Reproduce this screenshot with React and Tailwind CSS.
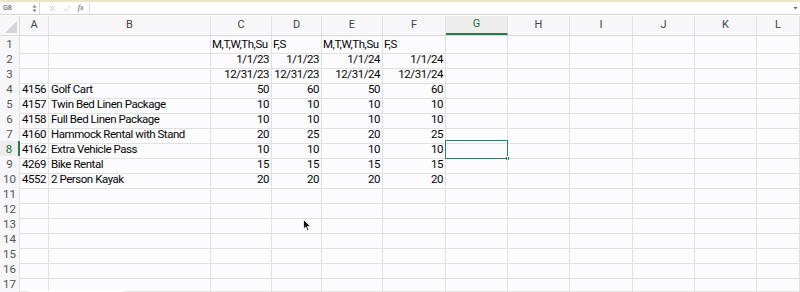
import React from "react";

const cols = ["A","B","C","D","E","F","G","H","I","J","K","L"];
const rows = [
  ["", "", "M,T,W,Th,Su", "F,S", "M,T,W,Th,Su", "F,S"],
  ["", "", "1/1/23", "1/1/23", "1/1/24", "1/1/24"],
  ["", "", "12/31/23", "12/31/23", "12/31/24", "12/31/24"],
  ["4156", "Golf Cart", "50", "60", "50", "60"],
  ["4157", "Twin Bed Linen Package", "10", "10", "10", "10"],
  ["4158", "Full Bed Linen Package", "10", "10", "10", "10"],
  ["4160", "Hammock Rental with Stand", "20", "25", "20", "25"],
  ["4162", "Extra Vehicle Pass", "10", "10", "10", "10"],
  ["4269", "Bike Rental", "15", "15", "15", "15"],
  ["4552", "2 Person Kayak", "20", "20", "20", "20"],
];
while (rows.length < 17) rows.push(["", "", "", "", "", ""]);

const gridCols = "grid grid-cols-[20px_29px_162px_61px_50px_61px_63px_62px_62px_63px_62px_62px_1fr]";

export default function App() {
  return (
    <div className="relative w-[800px] h-[292px] overflow-hidden bg-[#fcfbfd] text-[11.5px] tracking-[-0.45px] text-[#050505]" style={{ fontFamily: 'Roboto, "Liberation Sans", Arial, sans-serif' }}>
      {/* top strip */}
      <div className="h-[2px] bg-[#efe4c9]" />
      <div className="h-[13px] flex items-center bg-white border-b border-[#d6d6d6]">
        <div className="w-[40px] h-full flex items-center justify-between pl-[3px] pr-[2px] border-r border-[#dcdcdc]">
          <span className="text-[7px] text-[#444] tracking-normal">G8</span>
          <svg width="5" height="9" viewBox="0 0 5 9"><path d="M0.5 3.5 L2.5 1 L4.5 3.5Z M0.5 5.5 L2.5 8 L4.5 5.5Z" fill="#777" /></svg>
        </div>
        <div className="w-[50px] h-full flex items-center justify-around pl-[6px] pr-[2px] border-r border-[#dcdcdc]">
          <svg width="7" height="7" viewBox="0 0 7 7"><path d="M1 1 L6 6 M6 1 L1 6" stroke="#c4c4c4" strokeWidth="0.9" /></svg>
          <svg width="8" height="7" viewBox="0 0 8 7"><path d="M0.8 3.6 L3 5.8 L7.2 1" stroke="#c4c4c4" strokeWidth="0.9" fill="none" /></svg>
          <span className="italic text-[8px] text-[#555] tracking-normal" style={{ fontFamily: '"Liberation Serif", serif' }}>fx</span>
        </div>
        <div className="flex-1" />
        <svg className="mr-[2px]" width="5" height="4" viewBox="0 0 5 4"><path d="M0.5 1 L4.5 1 L2.5 3.5Z" fill="#666" /></svg>
      </div>
      <div className="h-[1px] bg-white" />
      {/* column header */}
      <div className={`${gridCols} h-[20px] bg-[#f7f6f8] border-b border-[#d9d9d9]`}>
        <div className="relative border-r border-[#d9d9d9]">
          <svg className="absolute right-[2px] bottom-[2px]" width="12" height="12" viewBox="0 0 12 12"><path d="M12 0 L12 12 L0 12Z" fill="#d4d4d4" /></svg>
        </div>
        {cols.map((c) => (
          <div key={c} className={`flex items-center justify-center border-r border-[#e1e1e1] text-[11px] tracking-normal ${c === "G" ? "text-[#1e6f3e] border-b-2 border-b-[#2a7a48] bg-[#ededed]" : "text-[#444]"}`}>{c}</div>
        ))}
      </div>
      {/* rows */}
      {rows.map((r, i) => {
        const isSel = i === 7;
        return (
          <div key={i} className={`${gridCols} h-[15px]`}>
            <div className={`flex items-center justify-center border-b border-[#e1e1e1] tracking-normal ${isSel ? "text-[#1e6f3e] bg-[#ededed] border-r-2 border-r-[#2a7a48]" : "text-[#555] bg-[#f7f6f8] border-r border-[#d9d9d9]"}`}>{i + 1}</div>
            <div className="flex items-center justify-end pr-[2px] border-r border-b border-[#e1e1e1]">{r[0]}</div>
            <div className="flex items-center pl-[2px] border-r border-b border-[#e1e1e1] whitespace-nowrap">{r[1]}</div>
            {[2, 3, 4, 5].map((j) => (
              <div key={j} className={`flex items-center pr-[2px] pl-[1px] border-r border-b border-[#e1e1e1] whitespace-nowrap ${i === 0 ? "justify-start" : "justify-end"}`}>{r[j]}</div>
            ))}
            <div className={`relative border-r border-b border-[#e1e1e1]`}>
              {isSel && (
                <>
                  <div className="absolute left-[-1px] top-[-1px] right-[-1px] bottom-[-1px] border border-[#3c7c55]" />
                  <div className="absolute right-[-2px] bottom-[-2px] w-[3px] h-[3px] bg-[#2a7a48]" />
                </>
              )}
            </div>
            {[7, 8, 9, 10, 11].map((j) => (
              <div key={j} className="border-r border-b border-[#e1e1e1]" />
            ))}
          </div>
        );
      })}
      {/* bottom bar */}
      <div className="flex h-[3px] bg-[#e6e6e6]">
        <div className="w-[29px]" />
        <div className="w-[94px] bg-white" />
      </div>
      {/* mouse cursor */}
      <svg className="absolute left-[303px] top-[219px]" width="9" height="13" viewBox="0 0 9 13">
        <path d="M0.5 0.5 L0.5 10 L2.8 7.9 L4.4 11.8 L5.9 11.1 L4.4 7.4 L7.6 7.4 Z" fill="#111" stroke="#fff" strokeWidth="0.8" />
      </svg>
    </div>
  );
}
